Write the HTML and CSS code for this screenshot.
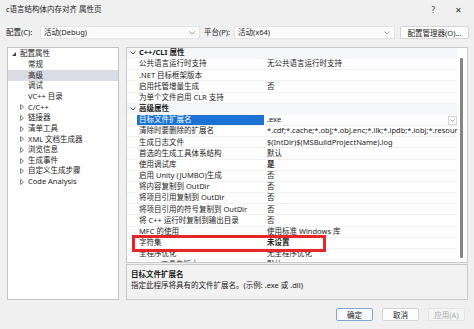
FILE: index.html
```html
<!DOCTYPE html>
<html lang="zh-CN">
<head>
<meta charset="utf-8">
<title>属性页</title>
<link rel="stylesheet" href="styles.css">
</head>
<body>
<div class="dialog">
  <div class="titlebar">
    <span class="title">c语言结构体内存对齐 属性页</span>
    <span class="tb-btns"><span class="help">?</span><span class="close">✕</span></span>
  </div>
  <div class="configbar">
    <span class="lbl lbl-cfg">配置(C):</span>
    <div class="combo combo-cfg"><span>活动(Debug)</span><svg class="chev" width="6" height="4" viewBox="0 0 6 4"><path d="M0.5 0.5 L3 3 L5.5 0.5" fill="none" stroke="#888" stroke-width="0.8"/></svg></div>
    <span class="lbl lbl-plat">平台(P):</span>
    <div class="combo combo-plat"><span>活动(x64)</span><svg class="chev" width="6" height="4" viewBox="0 0 6 4"><path d="M0.5 0.5 L3 3 L5.5 0.5" fill="none" stroke="#888" stroke-width="0.8"/></svg></div>
    <button class="btn btn-mgr">配置管理器(O)...</button>
  </div>
  <div class="main">
    <div class="tree">
      <div class="tnode lvl0"><svg class="tri" width="4" height="4" viewBox="0 0 4 4"><path d="M4 0 L4 4 L0 4Z" fill="#444"/></svg><span>配置属性</span></div>
      <div class="tnode lvl1"><span>常规</span></div>
      <div class="tnode lvl1 sel"><span>高级</span></div>
      <div class="tnode lvl1"><span>调试</span></div>
      <div class="tnode lvl1"><span>VC++ 目录</span></div>
      <div class="tnode lvl1c"><svg class="tri2" width="4" height="6" viewBox="0 0 4 6"><path d="M0.5 0.5 L3.5 3 L0.5 5.5Z" fill="none" stroke="#666" stroke-width="0.8"/></svg><span>C/C++</span></div>
      <div class="tnode lvl1c"><svg class="tri2" width="4" height="6" viewBox="0 0 4 6"><path d="M0.5 0.5 L3.5 3 L0.5 5.5Z" fill="none" stroke="#666" stroke-width="0.8"/></svg><span>链接器</span></div>
      <div class="tnode lvl1c"><svg class="tri2" width="4" height="6" viewBox="0 0 4 6"><path d="M0.5 0.5 L3.5 3 L0.5 5.5Z" fill="none" stroke="#666" stroke-width="0.8"/></svg><span>清单工具</span></div>
      <div class="tnode lvl1c"><svg class="tri2" width="4" height="6" viewBox="0 0 4 6"><path d="M0.5 0.5 L3.5 3 L0.5 5.5Z" fill="none" stroke="#666" stroke-width="0.8"/></svg><span>XML 文档生成器</span></div>
      <div class="tnode lvl1c"><svg class="tri2" width="4" height="6" viewBox="0 0 4 6"><path d="M0.5 0.5 L3.5 3 L0.5 5.5Z" fill="none" stroke="#666" stroke-width="0.8"/></svg><span>浏览信息</span></div>
      <div class="tnode lvl1c"><svg class="tri2" width="4" height="6" viewBox="0 0 4 6"><path d="M0.5 0.5 L3.5 3 L0.5 5.5Z" fill="none" stroke="#666" stroke-width="0.8"/></svg><span>生成事件</span></div>
      <div class="tnode lvl1c"><svg class="tri2" width="4" height="6" viewBox="0 0 4 6"><path d="M0.5 0.5 L3.5 3 L0.5 5.5Z" fill="none" stroke="#666" stroke-width="0.8"/></svg><span>自定义生成步骤</span></div>
      <div class="tnode lvl1c"><svg class="tri2" width="4" height="6" viewBox="0 0 4 6"><path d="M0.5 0.5 L3.5 3 L0.5 5.5Z" fill="none" stroke="#666" stroke-width="0.8"/></svg><span>Code Analysis</span></div>
    </div>
    <div class="right">
      <div class="grid">
        <div class="rows">
          <div class="row cat"><span class="tog"><svg width="6" height="4" viewBox="0 0 6 4"><path d="M0.5 0.5 L3 3 L5.5 0.5" fill="none" stroke="#333" stroke-width="0.9"/></svg></span><span class="catname">C++/CLI 属性</span></div>
          <div class="row"><span class="tog"></span><span class="name">公共语言运行时支持</span><span class="val">无公共语言运行时支持</span></div>
          <div class="row"><span class="tog"></span><span class="name">.NET 目标框架版本</span><span class="val"></span></div>
          <div class="row"><span class="tog"></span><span class="name">启用托管增量生成</span><span class="val">否</span></div>
          <div class="row"><span class="tog"></span><span class="name">为单个文件启用 CLR 支持</span><span class="val"></span></div>
          <div class="row cat"><span class="tog"><svg width="6" height="4" viewBox="0 0 6 4"><path d="M0.5 0.5 L3 3 L5.5 0.5" fill="none" stroke="#333" stroke-width="0.9"/></svg></span><span class="catname">高级属性</span></div>
          <div class="row selrow"><span class="tog"></span><span class="name sel">目标文件扩展名</span><span class="val">.exe<span class="dd"><svg width="5" height="3" viewBox="0 0 5 3"><path d="M0.5 0.5 L2.5 2.5 L4.5 0.5" fill="none" stroke="#777" stroke-width="0.7"/></svg></span></span></div>
          <div class="row"><span class="tog"></span><span class="name">清除时要删除的扩展名</span><span class="val">*.cdf;*.cache;*.obj;*.obj.enc;*.ilk;*.ipdb;*.iobj;*.resources;*.tlb</span></div>
          <div class="row"><span class="tog"></span><span class="name">生成日志文件</span><span class="val">$(IntDir)$(MSBuildProjectName).log</span></div>
          <div class="row"><span class="tog"></span><span class="name">首选的生成工具体系结构</span><span class="val">默认</span></div>
          <div class="row"><span class="tog"></span><span class="name">使用调试库</span><span class="val b">是</span></div>
          <div class="row"><span class="tog"></span><span class="name">启用 Unity (JUMBO)生成</span><span class="val">否</span></div>
          <div class="row"><span class="tog"></span><span class="name">将内容复制到 OutDir</span><span class="val">否</span></div>
          <div class="row"><span class="tog"></span><span class="name">将项目引用复制到 OutDir</span><span class="val">否</span></div>
          <div class="row"><span class="tog"></span><span class="name">将项目引用的符号复制到 OutDir</span><span class="val">否</span></div>
          <div class="row"><span class="tog"></span><span class="name">将 C++ 运行时复制到输出目录</span><span class="val">否</span></div>
          <div class="row"><span class="tog"></span><span class="name">MFC 的使用</span><span class="val">使用标准 Windows 库</span></div>
          <div class="row"><span class="tog"></span><span class="name">字符集</span><span class="val b">未设置</span></div>
          <div class="row"><span class="tog"></span><span class="name">全程序优化</span><span class="val">无全程序优化</span></div>
          <div class="row"><span class="tog"></span><span class="name">MSVC 工具集版本</span><span class="val">默认</span></div>
        </div>
        <div class="vscroll"><div class="thumb"></div></div>
        <div class="annot"></div>
      </div>
      <div class="desc">
        <div class="desc-title">目标文件扩展名</div>
        <div class="desc-text">指定此程序将具有的文件扩展名。(示例: .exe 或 .dll)</div>
      </div>
    </div>
  </div>
  <div class="footer">
    <button class="btn btn-ok">确定</button>
    <button class="btn">取消</button>
    <button class="btn btn-dis">应用(A)</button>
  </div>
</div>
</body>
</html>
```

FILE: styles.css
```css
* { box-sizing: border-box; margin: 0; padding: 0; }
html, body { width: 474px; height: 329px; overflow: hidden; }
body {
  background: #f0f0f0;
  font-family: "Noto Sans", "Noto Sans CJK SC", sans-serif;
  font-size: 7.5px;
  line-height: 1;
  color: #1b1b1b;
}
.dialog { display: flex; flex-direction: column; height: 100%; }

.titlebar {
  height: 20px;
  display: flex;
  align-items: center;
  justify-content: space-between;
  padding-left: 6px;
  padding-right: 12px;
}
.tb-btns { display: flex; gap: 20px; color: #333; }
.help { font-size: 8px; }
.close { font-size: 8px; }

.configbar {
  margin-top: 6px;
  height: 13px;
  display: flex;
  align-items: center;
  padding-left: 6px;
}
.lbl { white-space: nowrap; flex: none; }
.lbl-cfg { width: 34px; }
.lbl-plat { width: 30px; margin-left: 4px; }
.combo {
  flex: none;
  height: 13px;
  background: #fbfbfb;
  border: 1px solid #e4e4e4;
  display: flex;
  align-items: center;
  justify-content: space-between;
  padding: 0 4px 0 3px;
}
.combo-cfg { width: 160px; }
.combo-plat { width: 161px; }

.btn {
  font-family: inherit;
  font-size: 7.5px;
  color: #1b1b1b;
  height: 13px;
  background: #fdfdfd;
  border: 1px solid #d4d4d4;
  border-radius: 2px;
  display: flex;
  align-items: center;
  justify-content: center;
  flex: none;
}
.btn-mgr { width: 69px; margin-left: 5px; }

.main {
  margin-top: 8px;
  height: 253px;
  display: flex;
  gap: 7px;
  padding: 0 6px 0 7px;
}
.tree {
  width: 112px;
  flex: none;
  background: #fff;
  border: 1px solid #c4c4c4;
  padding-top: 0.7px;
}
.tnode {
  height: 10.67px;
  display: flex;
  align-items: center;
  white-space: nowrap;
}
.lvl0 { padding-left: 4px; }
.lvl0 .tri { margin-right: 4px; margin-top: -1px; }
.lvl1 { padding-left: 20px; }
.lvl1c { padding-left: 12px; }
.lvl1c .tri2 { margin-right: 4px; }
.tnode.sel { background: #d9dce4; }

.right { flex: 1; min-width: 0; display: flex; flex-direction: column; gap: 1px; }
.grid {
  position: relative;
  height: 216px;
  background: #fff;
  border: 1px solid #c9c9c9;
  display: flex;
  overflow: hidden;
  min-width: 0;
}
.rows { flex: 1; min-width: 0; overflow: hidden; }
.row {
  height: 11.17px;
  display: flex;
  align-items: center;
  border-bottom: 1px solid #f1f1f1;
  white-space: nowrap;
}
.row.cat { background: #f5f7fa; border-bottom-color: #f5f7fa; }
.tog { width: 10px; flex: none; display: flex; justify-content: center; padding-left: 1px; }
.catname { font-weight: 700; padding-left: 2px; }
.name {
  width: 127px;
  flex: none;
  height: 100%;
  display: flex;
  align-items: center;
  padding-left: 2px;
  overflow: hidden;
}
.name.sel { background: #1a73d2; color: #fff; }
.val {
  flex: 1;
  min-width: 0;
  height: 100%;
  display: flex;
  align-items: center;
  padding-left: 3px;
  overflow: hidden;
}
.val.b { font-weight: 700; }
.selrow .val { justify-content: space-between; }
.dd {
  width: 9px;
  height: 9px;
  flex: none;
  border: 1px solid #d6d6d6;
  background: #fafafa;
  display: flex;
  align-items: center;
  justify-content: center;
}
.vscroll {
  width: 10px;
  flex: none;
  padding: 10px 4px 4px 3px;
  display: flex;
}
.thumb { flex: 1; background: #858585; border-radius: 1px; }

.annot {
  position: absolute;
  left: 5px;
  top: 187px;
  width: 194px;
  height: 17px;
  border: 3px solid #e5262b;
}

.desc {
  height: 36px;
  border: 1px solid #c9c9c9;
  background: #f2f2f2;
  padding: 4px 0 0 4px;
}
.desc-title { font-weight: 700; height: 11px; display: flex; align-items: center; }
.desc-text { height: 12px; display: flex; align-items: center; }

.footer {
  margin-top: 8px;
  display: flex;
  justify-content: flex-end;
  gap: 9px;
  padding-right: 9px;
}
.footer .btn { width: 37px; }
.btn-ok { border-color: #7fa8d8; background: #f7f9fc; }
.btn-dis { color: #a8a8a8; border-color: #e3e3e3; background: #f5f5f5; }
```
